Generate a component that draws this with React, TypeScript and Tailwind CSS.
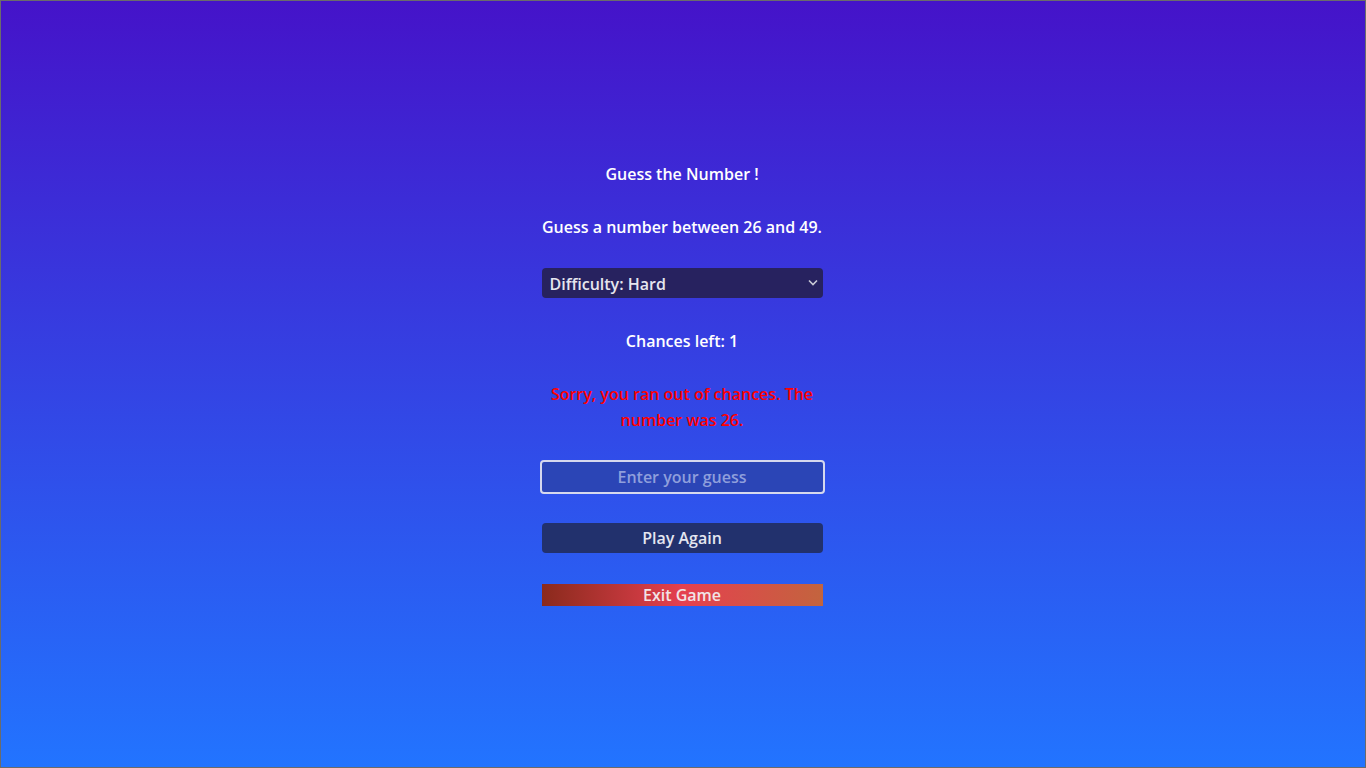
import { useState } from "react";

export default function App() {
    const [guess, setGuess] = useState("");
    const [difficulty, setDifficulty] = useState("hard");

    return (
        <div
            className="h-screen w-full border border-[#6b6b6b] bg-[linear-gradient(to_bottom,#4513c9,#2274ff)] flex items-center justify-center pr-[2px]"
            style={{ fontFamily: '"Open Sans", "Noto Sans", sans-serif' }}
        >
            <div className="w-[281px] flex flex-col items-center text-white font-semibold text-base">
                <h1 className="h-6 leading-6 text-base font-semibold">Guess the Number !</h1>
                <p className="mt-[29px] h-6 leading-6 whitespace-nowrap">
                    Guess a number between 26 and 49.
                </p>

                {/* 難易度の選択 */}
                <div className="relative mt-[29px] w-full">
                    <select
                        value={difficulty}
                        onChange={(e) => setDifficulty(e.target.value)}
                        className="w-full h-[30px] appearance-none rounded bg-[#27225f] pl-2 pr-8 pt-[1px] text-base font-semibold text-[#e6e6ee] outline-none"
                    >
                        <option value="easy">Difficulty: Easy</option>
                        <option value="medium">Difficulty: Medium</option>
                        <option value="hard">Difficulty: Hard</option>
                    </select>
                    <svg
                        className="pointer-events-none absolute right-[4px] top-[10px]"
                        width="12"
                        height="9"
                        viewBox="0 0 12 9"
                        fill="none"
                    >
                        <path d="M2 2.5 L6 6.5 L10 2.5" stroke="#c9c9d6" strokeWidth="1.6" />
                    </svg>
                </div>

                <p className="mt-[31px] h-6 leading-6">Chances left: 1</p>

                <p className="mt-[28px] text-center leading-[26px] text-[#ff0000]">
                    Sorry, you ran out of chances. The number was 26.
                </p>

                {/* 入力欄 */}
                <input
                    type="text"
                    inputMode="numeric"
                    value={guess}
                    onChange={(e) => setGuess(e.target.value)}
                    placeholder="Enter your guess"
                    disabled
                    className="mt-[27px] w-[285px] h-[34px] rounded border-2 border-[#d5d8ee] bg-[#2b45b6] text-center text-base font-semibold text-white placeholder:text-[#8f9fdc] outline-none"
                />

                <button className="mt-[29px] w-full h-[30px] rounded bg-[#22316d] text-base font-semibold text-[#e4e6f0]">
                    Play Again
                </button>

                <button className="mt-[31px] w-full h-[22px] leading-[22px] bg-[linear-gradient(to_right,#8a2a1c,#e5404f,#c3643e)] text-base font-semibold text-[#f1e4e6]">
                    Exit Game
                </button>
            </div>
        </div>
    );
}
